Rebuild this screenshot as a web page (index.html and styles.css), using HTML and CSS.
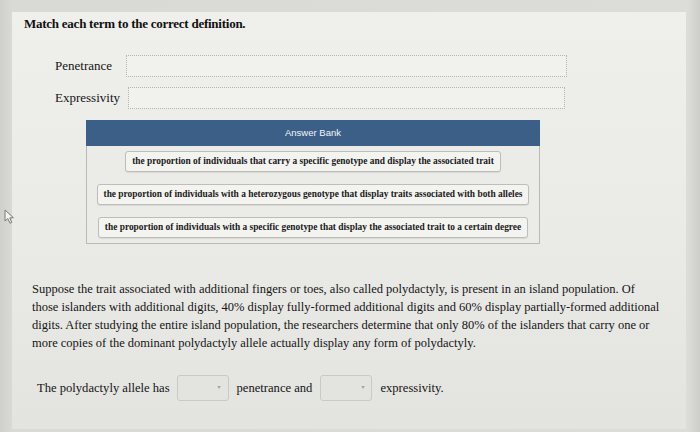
FILE: index.html
```html
<!DOCTYPE html>
<html>
<head>
<meta charset="utf-8">
<link rel="stylesheet" href="styles.css">
</head>
<body>
<div class="frame">
  <div class="panel">
    <div class="title">Match each term to the correct definition.</div>
    <div class="terms">
      <div class="term"><span class="label">Penetrance</span><div class="drop"></div></div>
      <div class="term"><span class="label">Expressivity</span><div class="drop drop2"></div></div>
    </div>
    <div class="bank">
      <div class="bank-head">Answer Bank</div>
      <div class="bank-body">
        <div class="chip">the proportion of individuals that carry a specific genotype and display the associated trait</div>
        <div class="chip">the proportion of individuals with a heterozygous genotype that display traits associated with both alleles</div>
        <div class="chip">the proportion of individuals with a specific genotype that display the associated trait to a certain degree</div>
      </div>
    </div>
    <p class="para">Suppose the trait associated with additional fingers or toes, also called polydactyly, is present in an island population. Of<br>those islanders with additional digits, 40% display fully-formed additional digits and 60% display partially-formed additional<br>digits. After studying the entire island population, the researchers determine that only 80% of the islanders that carry one or<br>more copies of the dominant polydactyly allele actually display any form of polydactyly.</p>
    <div class="answer">
      <span>The polydactyly allele has</span>
      <div class="select first"><span class="caret">&#9662;</span></div>
      <span>penetrance and</span>
      <div class="select"><span class="caret">&#9662;</span></div>
      <span>expressivity.</span>
    </div>
  </div>
</div>
<svg class="cursor" width="12" height="16" viewBox="0 0 12 16"><path d="M1 1 L1 12 L3.8 9.6 L6 14.2 L7.8 13.3 L5.7 8.9 L9.4 8.7 Z" fill="#f2f2f0" stroke="#7a7a78" stroke-width="1"/></svg>
</body>
</html>
```
FILE: styles.css
```css
html, body {
  margin: 0;
  padding: 0;
}
body {
  width: 700px;
  height: 432px;
  overflow: hidden;
  background: linear-gradient(90deg, #cfcfcb 0px, #d9d9d5 12px, #dcdcd8 688px, #cdcdc9 700px);
  font-family: "Liberation Serif", "Times New Roman", serif;
  color: #1c1c1c;
  position: relative;
}
.frame {
  padding: 12px 14px 3px 12px;
  height: 432px;
  box-sizing: border-box;
}
.panel {
  height: 100%;
  box-sizing: border-box;
  background: linear-gradient(180deg, #efefec 0%, #eaeae7 55%, #e3e3df 100%);
  padding-top: 4px;
}
.title {
  margin-left: 12px;
  font-size: 13px;
  line-height: 16px;
  color: #111;
  font-weight: bold;
  letter-spacing: -0.25px;
}
.terms {
  margin-top: 23px;
  margin-left: 43px;
  display: flex;
  flex-direction: column;
  gap: 10px;
}
.term {
  display: flex;
  align-items: center;
  height: 22px;
}
.label {
  width: 71px;
  font-size: 13px;
  color: #151515;
}
.drop {
  width: 439px;
  height: 20px;
  border: 1px dotted #b4b4ae;
  background: #f1f1ee;
}
.drop2 {
  margin-left: 2px;
  width: 435px;
}
.bank {
  margin-top: 11px;
  margin-left: 74px;
  width: 454px;
}
.bank-head {
  height: 26px;
  background: #3b5f87;
  color: #f4f6f8;
  font-family: "Liberation Sans", Arial, sans-serif;
  font-size: 9.5px;
  line-height: 26px;
  text-align: center;
}
.bank-body {
  border: 1px solid #b9b9b5;
  border-top: none;
  background: #ebebe8;
  height: 98px;
  box-sizing: border-box;
  padding-top: 5px;
  display: flex;
  flex-direction: column;
  align-items: center;
  gap: 12px;
}
.chip {
  height: 21px;
  box-sizing: border-box;
  border: 1px solid #bdbdb9;
  border-radius: 3px;
  background: #f3f3f0;
  box-shadow: 0 1px 1px rgba(0,0,0,0.08);
  font-size: 9.4px;
  line-height: 19px;
  padding: 0 6px;
  white-space: nowrap;
  color: #1a1a1a;
  font-weight: bold;
}
.para {
  margin: 36px 0 0 20px;
  font-size: 12.5px;
  line-height: 18px;
  white-space: nowrap;
  color: #151515;
}
.answer {
  margin-top: 23px;
  margin-left: 25px;
  display: flex;
  align-items: center;
  height: 26px;
  font-size: 12.6px;
  color: #151515;
}
.select {
  width: 52px;
  height: 26px;
  box-sizing: border-box;
  border: 1px solid #c9c9c5;
  border-radius: 3px;
  background: #e3e3e0;
  position: relative;
  margin: 0 8px;
}
.select.first {
  margin-left: 7px;
}
.caret {
  position: absolute;
  right: 7px;
  top: 7px;
  font-size: 6px;
  color: #a0a09c;
  font-family: "DejaVu Sans", sans-serif;
}
.cursor {
  position: absolute;
  left: 4px;
  top: 209px;
}
```
